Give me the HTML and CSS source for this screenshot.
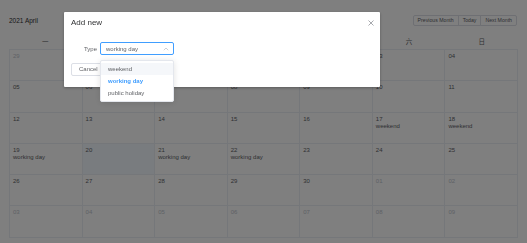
FILE: index.html
```html
<!DOCTYPE html>
<html>
<head>
<meta charset="utf-8">
<link rel="stylesheet" href="styles.css">
</head>
<body>
<div class="calendar">
  <div class="cal-header">
    <div class="cal-title">2021 April</div>
    <div class="btn-group">
      <button class="btn">Previous Month</button>
      <button class="btn">Today</button>
      <button class="btn">Next Month</button>
    </div>
  </div>
  <div class="week">
    <div>一</div><div>二</div><div>三</div><div>四</div><div>五</div><div>六</div><div>日</div>
  </div>
  <div class="grid">
    <div class="cell prev">29</div><div class="cell prev">30</div><div class="cell prev">31</div><div class="cell">01</div><div class="cell">02</div><div class="cell">03</div><div class="cell">04</div>
    <div class="cell">05</div><div class="cell">06</div><div class="cell">07</div><div class="cell">08</div><div class="cell">09</div><div class="cell">10</div><div class="cell">11</div>
    <div class="cell">12</div><div class="cell">13</div><div class="cell">14</div><div class="cell">15</div><div class="cell">16</div><div class="cell">17<br>weekend</div><div class="cell">18<br>weekend</div>
    <div class="cell">19<br>working day</div><div class="cell today">20</div><div class="cell">21<br>working day</div><div class="cell">22<br>working day</div><div class="cell">23</div><div class="cell">24</div><div class="cell">25</div>
    <div class="cell">26</div><div class="cell">27</div><div class="cell">28</div><div class="cell">29</div><div class="cell">30</div><div class="cell prev">01</div><div class="cell prev">02</div>
    <div class="cell prev">03</div><div class="cell prev">04</div><div class="cell prev">05</div><div class="cell prev">06</div><div class="cell prev">07</div><div class="cell prev">08</div><div class="cell prev">09</div>
  </div>
</div>

<div class="overlay"></div>

<div class="dialog">
  <div class="dialog-header">
    <span class="dialog-title">Add new</span>
    <svg class="close" width="6" height="6" viewBox="0 0 6 6"><path d="M0.5 0.5L5.5 5.5M5.5 0.5L0.5 5.5" stroke="#909399" stroke-width="0.8" fill="none"/></svg>
  </div>
  <div class="dialog-body">
    <div class="form-item">
      <label class="form-label">Type</label>
      <div class="select">
        <div class="select-input">
          <span>working day</span>
          <svg class="arrow" width="6" height="4" viewBox="0 0 6 4"><path d="M0.8 3.2L3 1L5.2 3.2" stroke="#c0c4cc" stroke-width="0.8" fill="none"/></svg>
        </div>
        <div class="dropdown">
          <div class="option hover">weekend</div>
          <div class="option selected">working day</div>
          <div class="option">public holiday</div>
        </div>
      </div>
    </div>
    <div class="footer">
      <button class="btn dlg-btn">Cancel</button>
    </div>
  </div>
</div>
</body>
</html>
```
FILE: styles.css
```css
* { box-sizing: border-box; }
html, body { margin: 0; padding: 0; }
body {
  width: 527px;
  height: 243px;
  background: #fff;
  font-family: "Liberation Sans", Arial, "Noto Sans CJK SC", sans-serif;
  font-size: 6px;
  color: #606266;
  overflow: hidden;
}
.calendar { padding: 0 9px; }
.cal-header {
  display: flex;
  justify-content: space-between;
  align-items: center;
  height: 34px;
  padding-top: 6px;
}
.cal-title { color: #303133; font-size: 6.5px; }
.btn-group { display: flex; margin-right: 1px; }
.btn {
  font-family: inherit;
  font-size: 5.2px;
  color: #606266;
  background: #fff;
  border: 1px solid #dcdfe6;
  height: 11px;
  padding: 0 4px;
  margin: 0;
  line-height: 9px;
}
.btn-group .btn + .btn { margin-left: -1px; }
.btn-group .btn:first-child { border-radius: 2px 0 0 2px; }
.btn-group .btn:last-child { border-radius: 0 2px 2px 0; }
.week {
  display: grid;
  grid-template-columns: repeat(7, 1fr);
  height: 15px;
  padding-bottom: 1px;
  align-items: center;
  text-align: center;
  color: #606266;
  font-size: 6.5px;
  font-family: "Noto Sans CJK SC", sans-serif;
}
.grid {
  display: grid;
  grid-template-columns: repeat(7, 1fr);
  grid-auto-rows: 31.3px;
  border-top: 1px solid #ebeef5;
  border-left: 1px solid #ebeef5;
}
.cell {
  border-right: 1px solid #ebeef5;
  border-bottom: 1px solid #ebeef5;
  padding: 3px 3px;
  font-size: 6px;
  line-height: 7.5px;
  color: #606266;
}
.cell.prev { color: #c0c4cc; }
.cell.today { background: #f2f8fe; }

.overlay {
  position: fixed;
  inset: 0;
  background: rgba(0, 0, 0, 0.5);
}
.dialog {
  position: fixed;
  left: 64px;
  top: 12px;
  width: 316px;
  height: 75px;
  background: #fff;
  border-radius: 1px;
  box-shadow: 0 1px 3px rgba(0,0,0,.3);
}
.dialog-header {
  display: flex;
  justify-content: space-between;
  align-items: center;
  padding: 6px 6px 0 7px;
  height: 15px;
}
.dialog-title { color: #303133; font-size: 8px; }
.close { display: block; }
.dialog-body { padding: 15px 7px 0 7px; }
.form-item { display: flex; align-items: center; height: 13px; }
.form-label {
  width: 26px;
  text-align: right;
  margin-right: 3px;
  color: #606266;
  font-size: 6px;
}
.select { position: relative; width: 74px; height: 13px; }
.select-input {
  height: 13px;
  border: 1px solid #409eff;
  border-radius: 2px;
  display: flex;
  align-items: center;
  justify-content: space-between;
  padding: 0 4px 0 5px;
  font-size: 6px;
  color: #606266;
}
.arrow { display: block; }
.dropdown {
  position: absolute;
  left: 0;
  top: 18px;
  width: 74px;
  background: #fff;
  border: 1px solid #e4e7ed;
  border-radius: 2px;
  box-shadow: 0 1px 6px rgba(0,0,0,.12);
  padding: 2px 0;
  z-index: 5;
}
.option {
  height: 12px;
  line-height: 12px;
  padding: 0 7px;
  font-size: 6px;
  color: #606266;
}
.option.hover { background: #f5f7fa; }
.option.selected { color: #409eff; font-weight: bold; }
.footer { display: flex; gap: 5px; margin-top: 8px; }
.dlg-btn {
  height: 13px;
  padding: 0 7px;
  border-radius: 2px;
  font-size: 6px;
  width: 34px;
}
```
